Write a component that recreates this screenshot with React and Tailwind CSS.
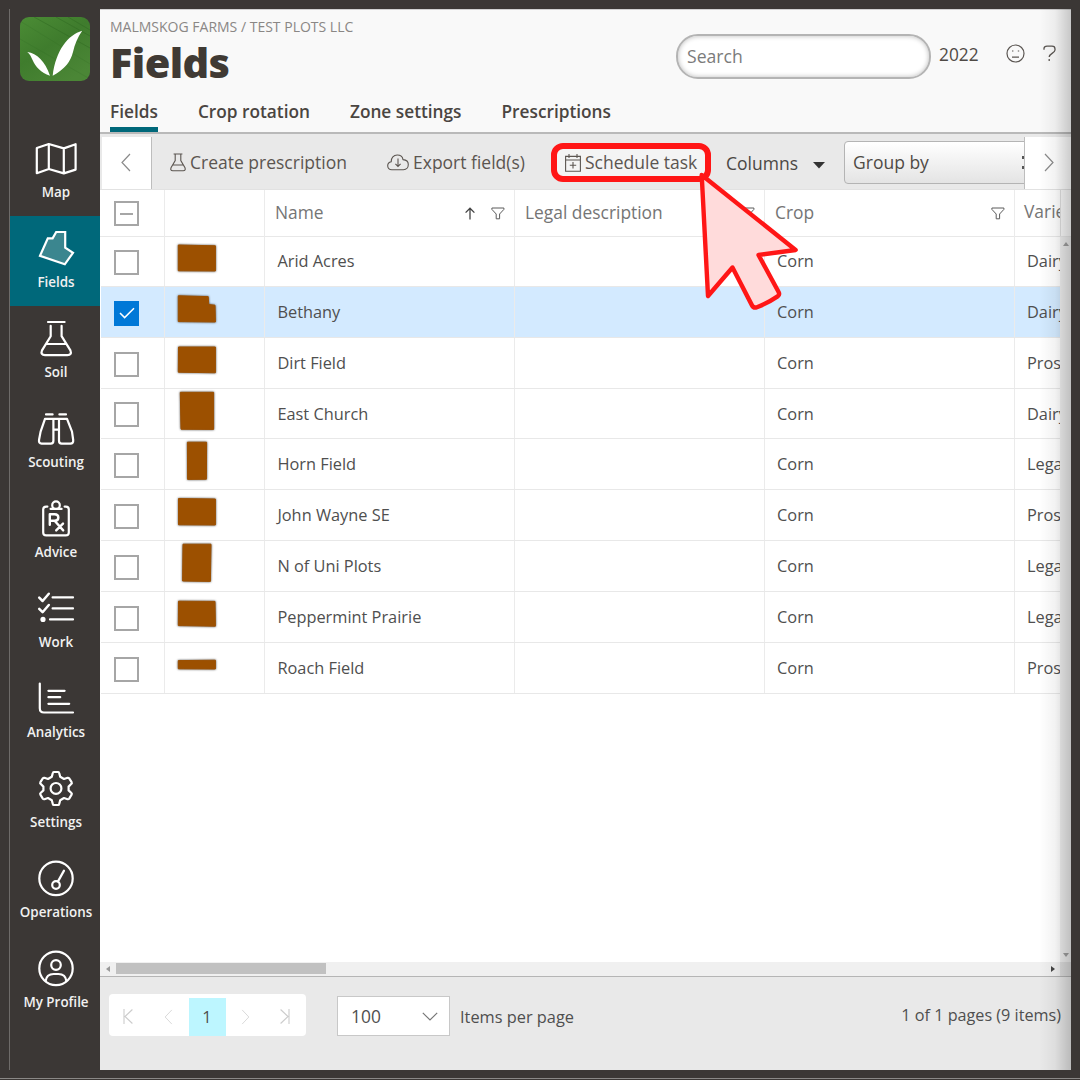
import React from 'react';

const navItems = [
  { label: 'Map', icon: MapIcon },
  { label: 'Fields', icon: FieldIcon, active: true },
  { label: 'Soil', icon: SoilIcon },
  { label: 'Scouting', icon: ScoutingIcon },
  { label: 'Advice', icon: AdviceIcon },
  { label: 'Work', icon: WorkIcon },
  { label: 'Analytics', icon: AnalyticsIcon },
  { label: 'Settings', icon: SettingsIcon },
  { label: 'Operations', icon: OperationsIcon },
  { label: 'My Profile', icon: ProfileIcon }
];

const rows = [
  { name: 'Arid Acres', crop: 'Corn', variety: 'Dairyland', shape: '1.3,7 38.4,7.8 38.4,33 1.3,32.8' },
  {
    name: 'Bethany',
    crop: 'Corn',
    variety: 'Dairyland',
    shape: '1.3,6.8 31.2,7.6 31.8,15.6 38,16.2 38.4,33 1.3,32.6',
    selected: true
  },
  { name: 'Dirt Field', crop: 'Corn', variety: 'Prosoy', shape: '1.5,7 38.4,7 38.4,32.8 1.3,32.2' },
  { name: 'East Church', crop: 'Corn', variety: 'Dairyland', shape: '3.3,1.3 36.6,1.3 36.6,38.4 4,38.2' },
  { name: 'Horn Field', crop: 'Corn', variety: 'Legacy', shape: '10.4,1.2 29.6,1.2 29.4,38.2 10.6,38.4' },
  { name: 'John Wayne SE', crop: 'Corn', variety: 'Prosoy', shape: '1.5,6.6 38.4,7 38.4,33 1.5,32.8' },
  { name: 'N of Uni Plots', crop: 'Corn', variety: 'Legacy', shape: '6,1.2 34,1.2 33.4,38.4 5.6,38' },
  { name: 'Peppermint Prairie', crop: 'Corn', variety: 'Legacy', shape: '1.5,7.2 38,7.4 38.4,32.2 1.3,31.6' },
  { name: 'Roach Field', crop: 'Corn', variety: 'Prosoy', shape: '1.3,15.6 38.4,15.2 38.4,24 1.3,23.8' }
];

function NavSvg({ children }) {
  return (
    <svg
      width="40"
      height="40"
      viewBox="0 0 40 40"
      fill="none"
      stroke="#fff"
      strokeWidth="2.2"
      strokeLinecap="round"
      strokeLinejoin="round"
      className="shrink-0 overflow-visible"
    >
      {children}
    </svg>
  );
}

function MapIcon() {
  return (
    <NavSvg>
      <path d="M.8 10 12.8 6 27.8 10.4 39.6 6.2V31.6L27.8 35.4 12.8 31 .8 35.2ZM12.8 6V31M27.8 10.4V35.4" />
    </NavSvg>
  );
}

function FieldIcon() {
  return (
    <NavSvg>
      <path
        d="M20.2 4H29.2V19.6L37 24.8 28.8 36.3 4 27.8 11.8 10.4H16.6Z"
        fill="#3b868f"
        strokeLinejoin="miter"
      />
    </NavSvg>
  );
}

function SoilIcon() {
  return (
    <NavSvg>
      <path d="M12 4H28.6M14.7 7.8V18.2L6 32.4C4.8 35.4 6 37.2 9 37.2H31.4C34.6 37.2 35.6 35.4 34.4 32.4L25.6 18.2V7.8M10.2 26H30.2" />
    </NavSvg>
  );
}

function ScoutingIcon() {
  return (
    <NavSvg>
      <path d="M10 6.4H16.6M23.4 6.4H30M9 10.8H31L36 23.6 37.2 32C37.4 34.4 36.4 35.6 34.4 35.6H25.6C23.8 35.6 23 34.6 23 32.8V10.8M9 10.8 4.6 23.6 3 32C2.8 34.4 3.6 35.6 5.6 35.6H14.8C16.6 35.6 17.4 34.6 17.4 32.8V10.8M17.4 21.6H23" />
    </NavSvg>
  );
}

function AdviceIcon() {
  return (
    <NavSvg>
      <path d="M11.4 8.6H10.2C8 8.6 7.2 9.6 7.2 11.6V34.4C7.2 36.6 8.2 37.4 10.2 37.4H29.8C32 37.4 32.8 36.4 32.8 34.4V11.6C32.8 9.4 31.8 8.6 29.8 8.6H28.6" />
      <circle cx="20" cy="7.2" r="3.8" />
      <path d="M14.6 10.9H25.6" />
      <path d="M13.8 26.8V16.2H18.6C23.6 16.2 23.6 22.8 18.6 22.8H13.8M18.6 22.8 27.2 32.4M27 25.6 20.2 32.4" strokeWidth="2.4" />
    </NavSvg>
  );
}

function WorkIcon() {
  return (
    <NavSvg>
      <path d="M3.2 9.6 6.6 13 12.8 5.8M3.2 20.8 6.6 24.2 12.8 17" strokeWidth="2.5" />
      <path d="M16.6 9.4H37M16.6 20.4H37M14 31.4H37" />
      <circle cx="7" cy="31.4" r="2.6" fill="#fff" stroke="none" />
    </NavSvg>
  );
}

function AnalyticsIcon() {
  return (
    <NavSvg>
      <path d="M3.8 5.6V30.2C3.8 33.2 5.2 34.5 8 34.5H37M12.4 12.8H28.6M12.4 19.2H24.2M12.4 25.8H33.2" />
    </NavSvg>
  );
}

function SettingsIcon() {
  return (
    <NavSvg>
      <path d="M17.8 4H22.2Q23 4 23.2 5L24.2 8.8 28 11 31.6 9.8Q32.6 9.6 33.2 10.4L35.6 14.2Q36.2 15.2 35.4 15.8L32.6 18.6V22.4L35.4 25Q36.2 25.8 35.6 26.6L33.2 30.6Q32.6 31.4 31.6 31.2L28 30 24.2 32.2 23.2 36Q23 37 22.2 37H17.8Q17 37 16.8 36L15.8 32.2 12 30 8.4 31.2Q7.4 31.4 6.8 30.6L4.4 26.6Q3.8 25.8 4.6 25L7.4 22.4V18.6L4.6 15.8Q3.8 15.2 4.4 14.2L6.8 10.4Q7.4 9.6 8.4 9.8L12 11 15.8 8.8 16.8 5Q17 4 17.8 4Z" />
      <circle cx="20" cy="20.4" r="5.4" />
    </NavSvg>
  );
}

function OperationsIcon() {
  return (
    <NavSvg>
      <circle cx="20" cy="20.4" r="16.7" />
      <circle cx="20" cy="27" r="3.8" />
      <path d="M22 23.4 28 12.6" />
    </NavSvg>
  );
}

function ProfileIcon() {
  return (
    <NavSvg>
      <circle cx="20" cy="20.4" r="16.7" />
      <circle cx="20" cy="17" r="4.8" />
      <path d="M9.6 33C10.2 28.4 13.2 26 17.6 26H22.4C26.8 26 29.8 28.4 30.4 33" />
    </NavSvg>
  );
}

function Logo() {
  return (
    <svg width="70" height="64" viewBox="0 0 70 64" className="mx-auto">
      <defs>
        <linearGradient id="grass" x1="0" y1="0" x2="0.7" y2="1">
          <stop offset="0" stopColor="#4b8c35" />
          <stop offset="0.5" stopColor="#3f7c2d" />
          <stop offset="1" stopColor="#4b8636" />
        </linearGradient>
        <clipPath id="logoClip">
          <rect width="70" height="64" rx="9" />
        </clipPath>
      </defs>
      <g clipPath="url(#logoClip)">
        <rect width="70" height="64" fill="url(#grass)" />
        <path d="M14 0 70 31M36 0 70 19M48 0 70 13" stroke="#2f6a22" strokeWidth="1" opacity=".5" fill="none" />
        <path d="M0 4 70 47M0 22 70 62" stroke="#2f6a22" strokeWidth="1" opacity=".2" fill="none" />
      </g>
      <path d="M7.3 35C17 36.6 25 44 30 58.7 21 56 15.4 49.6 12.8 43.6 11.4 40.4 10 37 7.3 35Z" fill="#fff" />
      <path d="M62.2 13.8C48 18 36 33 32.7 58.7 45 52 50.6 44.6 53 35 54.8 27 57.6 20.6 62.2 13.8Z" fill="#fff" />
    </svg>
  );
}

function Chevron({ dir = 'left', size = 18, color = '#8a8a8a' }) {
  const d = {
    left: 'M13 1 5 9.5 13 18',
    right: 'M5 1 13 9.5 5 18'
  }[dir];
  return (
    <svg width={size} height={size + 1} viewBox="0 0 18 19" fill="none" stroke={color} strokeWidth="1.2">
      <path d={d} />
    </svg>
  );
}

function FilterIcon() {
  return (
    <svg width="14" height="13" viewBox="0 0 14 13" fill="none" stroke="#5a5a5a" strokeWidth="1" className="mt-px">
      <path d="M.9 1H12.9V2.4L8.6 7V11.8H5.2V7L.9 2.4Z" />
    </svg>
  );
}

function Checkbox({ checked, partial }) {
  if (checked) {
    return (
      <div className="flex h-[25px] w-[25px] items-center justify-center bg-[#0078d7]">
        <svg width="16" height="12" viewBox="0 0 16 12" fill="none" stroke="#fff" strokeWidth="1.5">
          <path d="M1 6 5.6 10.6 15 1.2" />
        </svg>
      </div>
    );
  }
  return (
    <div className="flex h-[25px] w-[25px] items-center justify-center border-2 border-[#a6a6a6] bg-white">
      {partial && <div className="h-0.5 w-[13px] bg-[#a6a6a6]" />}
    </div>
  );
}

function Sidebar() {
  return (
    <nav className="flex w-[91px] shrink-0 flex-col border-l border-[#6e6b69] pt-2">
      <Logo />
      <div className="mt-[45px] flex flex-col">
        {navItems.map(({ label, icon: Icon, active }) => (
          <div
            key={label}
            className={`flex h-[90px] flex-col items-center pt-3 pl-[2px] ${active ? 'bg-[#00687a]' : ''}`}
          >
            <Icon />
            <span className="mt-1 text-[13.4px] leading-5 font-semibold whitespace-nowrap text-[#f1f1f1]">
              {label}
            </span>
          </div>
        ))}
      </div>
    </nav>
  );
}

function Header() {
  return (
    <header className="h-[125px] shrink-0 border-t border-b-2 border-t-[#d0d0d0] border-b-[#b9b9b9] bg-[#f9f9f9] pl-[10px]">
      <div className="flex h-[84px] justify-between">
        <div>
          <div className="pt-[7px] text-[14px] leading-5 whitespace-nowrap text-[#8a8785]">
            MALMSKOG FARMS / TEST PLOTS LLC
          </div>
          <h1 className="text-[41.5px] leading-[50px] font-extrabold tracking-[-0.6px] text-[#403a34]">Fields</h1>
        </div>
        <div className="flex h-[92px] items-center text-[#4f4a45]">
          <div className="flex h-[45px] w-[255px] items-center rounded-[22px] border-2 border-[#b4b4b4] bg-white pl-[9px] text-[17.6px] text-[#7b7b7b] shadow-[inset_0_0_5px_#bbb]">
            Search
          </div>
          <span className="mb-[3px] ml-2 w-[40px] text-[17.3px]">2022</span>
          <svg className="mb-[5px] ml-[27px]" width="19" height="19" viewBox="0 0 19 19" fill="none" stroke="#5b5652" strokeWidth="1.2">
            <circle cx="9.5" cy="9.5" r="8.5" />
            <path d="M6 13.1H13M6 7H7.4M11.8 7H13.2" />
          </svg>
          <svg className="mr-[15px] mb-[5px] ml-[18px]" width="13" height="17" viewBox="0 0 13 17" fill="none" stroke="#5b5652" strokeWidth="1.3">
            <path d="M1 4.8V3.4C1.2 1.6 2.4 1.2 4 1.2H9C11 1.2 12 2.2 12 4V5C12 8.2 6.6 8 6.2 12M6.2 14V16" />
          </svg>
        </div>
      </div>
      <div className="flex h-[38px] gap-[40px] text-[17.25px] leading-[35px] font-semibold whitespace-nowrap text-[#4a4541]">
        <span className="border-b-[5px] border-[#00687a]">Fields</span>
        <span>Crop rotation</span>
        <span>Zone settings</span>
        <span>Prescriptions</span>
      </div>
    </header>
  );
}

function Toolbar() {
  return (
    <div className="flex h-[56px] shrink-0 border-b border-[#e2e2e2] bg-[#e9e9e9] pt-[3px] pl-[2px] text-[17.5px] whitespace-nowrap text-[#5b5550]">
      <div className="flex w-[50px] items-center justify-center border-r border-[#bdbdbd] bg-white pr-[2px] pb-[2px]">
        <Chevron />
      </div>
      <div className="flex w-[872px] items-center overflow-hidden pb-px pl-[18px]">
        <div className="flex w-[217px] shrink-0 items-center gap-[4px]">
          <svg width="16" height="19" viewBox="0 0 16 19" fill="none" stroke="#5b5550" strokeWidth="1.1">
            <path d="M3.6 1H12.4M5.2 1V7.6L1 14.8C.4 16.8 1 17.8 2.8 17.8H13.2C15 17.8 15.6 16.8 15 14.8L10.8 7.6V1M3 12H13" />
          </svg>
          Create prescription
        </div>
        <div className="flex w-[167px] shrink-0 items-center gap-[4px]">
          <svg width="22" height="17" viewBox="0 0 22 17" fill="none" stroke="#5b5550" strokeWidth="1.1">
            <path d="M4.8 15.8C2.2 15.8.7 14 .7 11.8S2.2 8.2 4.2 7.8C4 3.6 6.8 1 10.2 1S15.6 2.8 16 5.6C19.6 5.8 21.3 8 21.3 10.6S19.6 15.8 16.4 15.8ZM11 4.6V12M8.4 9.8 11 12.4 13.6 9.8" />
          </svg>
          Export field(s)
        </div>
        <div className="flex h-[32px] w-[154px] shrink-0 items-center gap-[4px] rounded-[8px] bg-[#f4f4f4] pl-[11px]">
          <svg width="16" height="18" viewBox="0 0 16 18" fill="none" stroke="#5b5550" strokeWidth="1.1">
            <path d="M.6 2.4H15.4V17.2H.6ZM.6 6H15.4M4 0V4M12 0V4M8 8V14.4M4.8 11.2H11.2" />
          </svg>
          Schedule task
        </div>
        <div className="flex w-[136px] shrink-0 items-center gap-[15px] pt-[2px] pl-[18px] text-[#4b4744]">
          Columns
          <svg width="12" height="7" viewBox="0 0 12 7" fill="#333" className="mt-1">
            <path d="M0 0H12L6 6.5Z" />
          </svg>
        </div>
        <div className="flex h-[43px] w-[190px] shrink-0 items-center justify-between rounded-[4px] border border-[#b4b4b4] bg-gradient-to-b from-white to-[#e4e4e4] pl-[8px] text-[#4f4a45]">
          Group by
          <div className="mr-[5px] flex flex-col gap-[7px]">
            <div className="h-[3px] w-[6px] bg-[#555]" />
            <div className="h-[3px] w-[6px] bg-[#555]" />
          </div>
        </div>
      </div>
      <div className="flex flex-1 items-center justify-center border-l border-[#bdbdbd] bg-white pb-[2px] pl-[2px]">
        <Chevron dir="right" />
      </div>
    </div>
  );
}

function FieldTable() {
  return (
    <div className="flex h-[772px] shrink-0 flex-col overflow-hidden bg-white whitespace-nowrap">
      <div className="flex h-[47px] shrink-0 border-b border-[#e8e8e8] pl-px text-[17.4px] leading-[43px] text-[#757575]">
        <div className="flex w-[64px] shrink-0 items-center border-r border-[#ebebeb] pt-px pl-[13px]">
          <Checkbox partial />
        </div>
        <div className="w-[100px] shrink-0 border-r border-[#ebebeb]" />
        <div className="flex w-[250px] shrink-0 items-center border-r border-[#ebebeb] pr-[9px] pl-[10px]">
          <span className="-mt-[2px] flex-1">Name</span>
          <svg width="12" height="13" viewBox="0 0 12 13" fill="none" stroke="#444" strokeWidth="1.3" className="mt-px mr-[15px]">
            <path d="M6 12.6V1.4M1.6 5.6 6 1.2 10.4 5.6" />
          </svg>
          <FilterIcon />
        </div>
        <div className="flex w-[250px] shrink-0 items-center border-r border-[#ebebeb] pr-[9px] pl-[10px]">
          <span className="-mt-[2px] flex-1">Legal description</span>
          <FilterIcon />
        </div>
        <div className="flex w-[250px] shrink-0 items-center border-r border-[#ebebeb] pr-[9px] pl-[10px]">
          <span className="-mt-[2px] flex-1">Crop</span>
          <FilterIcon />
        </div>
        <div className="w-[46px] shrink-0 overflow-hidden border-r border-[#e0e0e0] pl-[9px]">Variety</div>
        <div className="flex-1 bg-[#fbfbfb]" />
      </div>
      <div className="flex flex-1">
        <div className="-mt-px w-[960px] pl-px text-[16.35px] text-[#4f4f4f]">
          {rows.map((row) => (
            <div
              key={row.name}
              className={`flex h-[50.85px] border-b border-[#e8e8e8] leading-[50px] ${row.selected ? 'bg-[#d3eaff]' : ''}`}
            >
              <div className="flex w-[64px] shrink-0 items-center border-r border-[#ebebeb] pt-[3px] pl-[13px]">
                <Checkbox checked={row.selected} />
              </div>
              <div className="w-[100px] shrink-0 border-r border-[#ebebeb] pt-[2px] pl-[11.5px]">
                <svg width="40" height="41" viewBox="0 0 40 41" className="overflow-visible drop-shadow-[0_0_1px_#555]">
                  <polygon points={row.shape} fill="#9c5000" stroke="#9c5000" strokeWidth="1" strokeLinejoin="round" />
                </svg>
              </div>
              <div className="w-[250px] shrink-0 border-r border-[#ebebeb] pl-[12.4px]">{row.name}</div>
              <div className="w-[250px] shrink-0 border-r border-[#ebebeb]" />
              <div className="w-[250px] shrink-0 border-r border-[#ebebeb] pl-[12px]">{row.crop}</div>
              <div className="w-[45px] shrink-0 overflow-hidden pl-[12px]">{row.variety}</div>
            </div>
          ))}
        </div>
        <div className="flex flex-1 flex-col items-center justify-between bg-[#f0f0f0] py-[5px]">
          <svg width="6" height="4" viewBox="0 0 6 4" fill="#a0a0a0">
            <path d="M0 4H6L3 0Z" />
          </svg>
          <svg width="6" height="4" viewBox="0 0 6 4" fill="#a0a0a0">
            <path d="M0 0H6L3 4Z" />
          </svg>
        </div>
      </div>
    </div>
  );
}

function HorizontalScrollbar() {
  return (
    <div className="flex h-[15px] shrink-0 border-b border-[#b5b5b5] bg-[#f0f0f0]">
      <div className="flex w-[16px] items-center justify-center">
        <svg width="4" height="6" viewBox="0 0 4 6" fill="#999">
          <path d="M4 0V6L0 3Z" />
        </svg>
      </div>
      <div className="mt-[1px] h-[11px] w-[210px] bg-[#c1c1c1]" />
      <div className="flex flex-1 items-center justify-end pr-[5px]">
        <svg width="4" height="6" viewBox="0 0 4 6" fill="#444">
          <path d="M0 0V6L4 3Z" />
        </svg>
      </div>
      <div className="w-[11px] bg-[#dedede]" />
    </div>
  );
}

function Footer() {
  return (
    <footer className="flex flex-1 items-start bg-[#e9e9e9] pr-[10px] pl-[9px] text-[16.35px] text-[#4f4f4f]">
      <div className="mt-[17px] flex h-[42px] w-[197px] rounded-[4px] bg-white">
        <div className="flex w-[40px] items-center justify-center pt-[3px] pr-[2px]">
          <svg width="10" height="15" viewBox="0 0 10 15" fill="none" stroke="#ccc" strokeWidth="1.1">
            <path d="M1 0V15M9.4.5 2 7.5 9.4 14.5" />
          </svg>
        </div>
        <div className="flex w-[40px] items-center justify-center pt-[3px] pr-[2px]">
          <Chevron size={15} color="#dadada" />
        </div>
        <div className="mt-1 w-[37px] bg-[#bdf6ff] pr-px text-center leading-[39px]">1</div>
        <div className="flex w-[38px] items-center justify-center pt-[3px]">
          <Chevron dir="right" size={15} color="#dadada" />
        </div>
        <div className="flex w-[42px] items-center justify-center pt-[3px]">
          <svg width="10" height="15" viewBox="0 0 10 15" fill="none" stroke="#ccc" strokeWidth="1.1">
            <path d="M9 0V15M.6.5 8 7.5.6 14.5" />
          </svg>
        </div>
      </div>
      <div className="mt-[19px] ml-[31px] flex h-[40px] w-[113px] items-center justify-between border border-[#c8c8c8] bg-white pr-[11px] pl-[13px] text-[17.4px]">
        100
        <svg width="16" height="9" viewBox="0 0 16 9" fill="none" stroke="#777" strokeWidth="1.2">
          <path d="M.8.8 8 8 15.2.8" />
        </svg>
      </div>
      <span className="mt-[28px] ml-[10px] flex-1 leading-6">Items per page</span>
      <span className="mt-[26px] text-[16.2px] leading-6">1 of 1 pages (9 items)</span>
    </footer>
  );
}

function Callout() {
  return (
    <>
      <div className="absolute top-[143px] left-[551px] h-[39px] w-[160px] rounded-[12px] border-[6px] border-[#ff1616]" />
      <svg className="absolute top-[165px] left-[690px]" width="120" height="150" viewBox="690 165 120 150">
        <path
          d="M701.7 175 795.6 250 758.5 255 778.6 292Q780 294.6 777.6 296.4 768 303 757 307.2 753.6 308.4 752 305.4L732.5 267.5 708 296Z"
          fill="#ffdbdb"
          stroke="#ff1616"
          strokeWidth="4.4"
          strokeLinejoin="round"
        />
      </svg>
    </>
  );
}

export default function App() {
  return (
    <div className="relative flex h-[1080px] w-[1080px] flex-col overflow-hidden bg-[#3b3735] font-['Open_Sans',sans-serif]">
      <div className="mt-[9px] ml-[9px] flex h-[1061px] w-[1062px]">
        <Sidebar />
        <main className="relative flex min-w-0 flex-1 flex-col">
          <Header />
          <Toolbar />
          <FieldTable />
          <HorizontalScrollbar />
          <Footer />
          <div className="absolute inset-y-0 right-0 w-[32px] bg-gradient-to-r from-black/0 via-black/5 to-black/20" />
        </main>
      </div>
      <div className="mt-[8px] h-px bg-[#8a8886]" />
      <Callout />
    </div>
  );
}
